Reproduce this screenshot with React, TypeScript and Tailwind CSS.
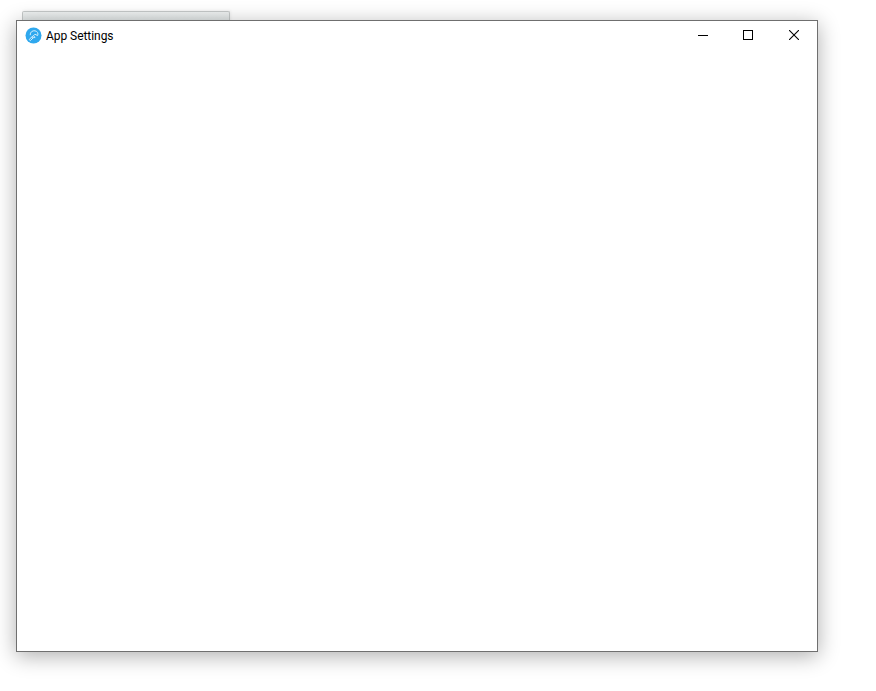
export default function App() {
  return (
    <div className="relative h-[691px] w-[876px] overflow-hidden bg-white pl-4 pt-5 font-['Roboto',sans-serif]">
      <div className="absolute left-[22px] top-[11px] h-[12px] w-[208px] rounded-t-[2px] border border-b-0 border-[#c4c8c8] bg-gradient-to-b from-[#eef1f1] to-[#dde2e2] shadow-[1px_-1px_3px_rgba(0,0,0,0.05)]" />
      <div className="relative flex h-[632px] w-[802px] flex-col border border-[#6f6f6f] bg-white shadow-[0_4px_20px_rgba(0,0,0,0.32)]">
        <div className="flex h-[28px] items-center pl-[8px]">
          <svg width="17" height="17" viewBox="0 0 17 17" className="shrink-0">
            <circle cx="8.5" cy="8.5" r="8" fill="#2fa8ee" />
            <path d="M5.2 8.2 C5 5 7.5 3.4 10 3.8 C12.5 4.2 13.6 6.6 12.6 8.6 L10 7.2 L8.4 8.8 L10.2 10.4 C8.6 11 7.4 10.6 6.6 10 L4.2 12.6" fill="none" stroke="#d5eefc" strokeWidth="1" />
            <path d="M6.6 10 L8.4 8.8 M4.2 12.6 L5.4 13.6 L8 11" fill="none" stroke="#d5eefc" strokeWidth="1" />
          </svg>
          <span className="ml-[4px] pt-[2px] text-[12px] leading-[30px] tracking-[-0.05px] text-black">App Settings</span>
          <div className="ml-auto flex h-full items-center">
            <div className="flex h-full w-[46px] items-center justify-center pl-[1px]">
              <svg width="10" height="10" viewBox="0 0 10 10"><path d="M0 5.5H10" stroke="#000" strokeWidth="1" /></svg>
            </div>
            <div className="flex h-full w-[46px] items-center justify-center">
              <svg width="10" height="10" viewBox="0 0 10 10"><rect x="0.5" y="0.5" width="9" height="9" fill="none" stroke="#000" strokeWidth="1" /></svg>
            </div>
            <div className="flex h-full w-[46px] items-center justify-center pr-[1px]">
              <svg width="10" height="10" viewBox="0 0 10 10"><path d="M0 0L10 10M10 0L0 10" stroke="#000" strokeWidth="1.1" /></svg>
            </div>
          </div>
        </div>
        <div className="flex-1" />
      </div>
    </div>
  );
}
